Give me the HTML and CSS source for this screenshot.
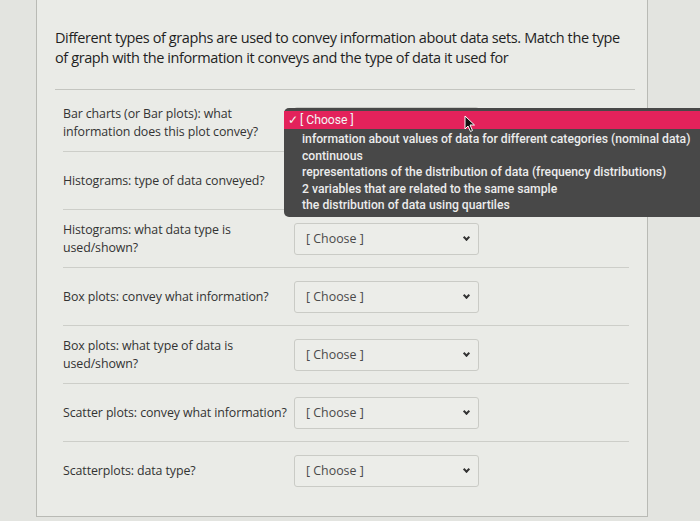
FILE: index.html
```html
<!DOCTYPE html>
<html>
<head>
<meta charset="utf-8">
<link rel="stylesheet" href="styles.css">
</head>
<body>
<div class="card">
  <p class="question">Different types of graphs are used to convey information about data sets. Match the type of graph with the information it conveys and the type of data it used for</p>
  <div class="rows">
    <div class="row">
      <div class="label">Bar charts (or Bar plots): what information does this plot convey?</div>
      <div class="select"><span>[ Choose ]</span><span class="chev"></span></div>
    </div>
    <div class="row">
      <div class="label">Histograms: type of data conveyed?</div>
      <div class="select"><span>[ Choose ]</span><span class="chev"></span></div>
    </div>
    <div class="row">
      <div class="label">Histograms: what data type is used/shown?</div>
      <div class="select"><span>[ Choose ]</span><span class="chev"></span></div>
    </div>
    <div class="row">
      <div class="label">Box plots: convey what information?</div>
      <div class="select"><span>[ Choose ]</span><span class="chev"></span></div>
    </div>
    <div class="row">
      <div class="label">Box plots: what type of data is used/shown?</div>
      <div class="select"><span>[ Choose ]</span><span class="chev"></span></div>
    </div>
    <div class="row">
      <div class="label">Scatter plots: convey what information?</div>
      <div class="select"><span>[ Choose ]</span><span class="chev"></span></div>
    </div>
    <div class="row last">
      <div class="label">Scatterplots: data type?</div>
      <div class="select"><span>[ Choose ]</span><span class="chev"></span></div>
    </div>
  </div>
</div>

<div class="menu">
  <div class="opt selected"><span class="tick">✓</span>[ Choose ]</div>
  <div class="opt">information about values of data for different categories (nominal data)</div>
  <div class="opt">continuous</div>
  <div class="opt">representations of the distribution of data (frequency distributions)</div>
  <div class="opt">2 variables that are related to the same sample</div>
  <div class="opt">the distribution of data using quartiles</div>
</div>

<svg class="cursor" width="12" height="18" viewBox="0 0 12 18">
  <path d="M1 1 L1 14 L4 11 L6.5 16.5 L8.5 15.5 L6 10 L10.5 10 Z" fill="#111" stroke="#fff" stroke-width="1"/>
</svg>
</body>
</html>
```

FILE: styles.css
```css
html, body {
  margin: 0;
  padding: 0;
}
body {
  background: #e3e4e0;
  width: 700px;
  height: 521px;
  overflow: hidden;
  position: relative;
  font-family: "Open Sans", "DejaVu Sans", sans-serif;
}
.card {
  margin-left: 36px;
  width: 612px;
  background: #eaebe7;
  border: 1px solid #b9bab5;
  border-top: none;
  padding: 28px 0 17px 0;
  box-sizing: border-box;
}
.question {
  margin: 0 12px 0 18px;
  padding-bottom: 21px;
  border-bottom: 1px solid #c4c5c0;
  font-size: 14.5px;
  line-height: 20px;
  color: #1f1f1f;
  letter-spacing: -0.4px;
}
.rows {
  margin: 0 18px 0 26px;
  padding-top: 4px;
}
.row {
  height: 57px;
  border-bottom: 1px solid #cdcec9;
  display: flex;
  align-items: center;
}
.row.last {
  border-bottom: none;
}
.label {
  width: 231px;
  flex: none;
  font-size: 12.4px;
  line-height: 18px;
  color: #333;
  letter-spacing: -0.1px;
}
.select {
  width: 185px;
  height: 32px;
  box-sizing: border-box;
  border: 1px solid #cacbc6;
  border-radius: 3px;
  background: #ecede9;
  display: flex;
  align-items: center;
  justify-content: space-between;
  padding: 0 6px 0 11px;
  font-size: 12.4px;
  color: #4a4a4a;
}
.chev {
  width: 3px;
  height: 3px;
  border-right: 2px solid #333;
  border-bottom: 2px solid #333;
  transform: rotate(45deg);
  margin-top: -3px;
  margin-right: 3px;
}
.menu {
  position: absolute;
  left: 284px;
  top: 108px;
  width: 430px;
  height: 109px;
  background: #484848;
  border-radius: 5px;
  padding-top: 3px;
  box-sizing: border-box;
  font-family: "Roboto", "Liberation Sans", sans-serif;
  font-weight: 500;
  font-size: 12.2px;
  color: #ececec;
}
.opt {
  height: 16.5px;
  line-height: 16.5px;
  padding-left: 18px;
  white-space: nowrap;
}
.opt.selected {
  background: #e3225b;
  height: 18px;
  line-height: 18px;
  padding-left: 4px;
  margin-bottom: 2px;
  font-weight: 400;
  color: #f4f4f4;
}
.tick {
  display: inline-block;
  width: 12px;
}
.cursor {
  position: absolute;
  left: 464px;
  top: 115px;
}
```
